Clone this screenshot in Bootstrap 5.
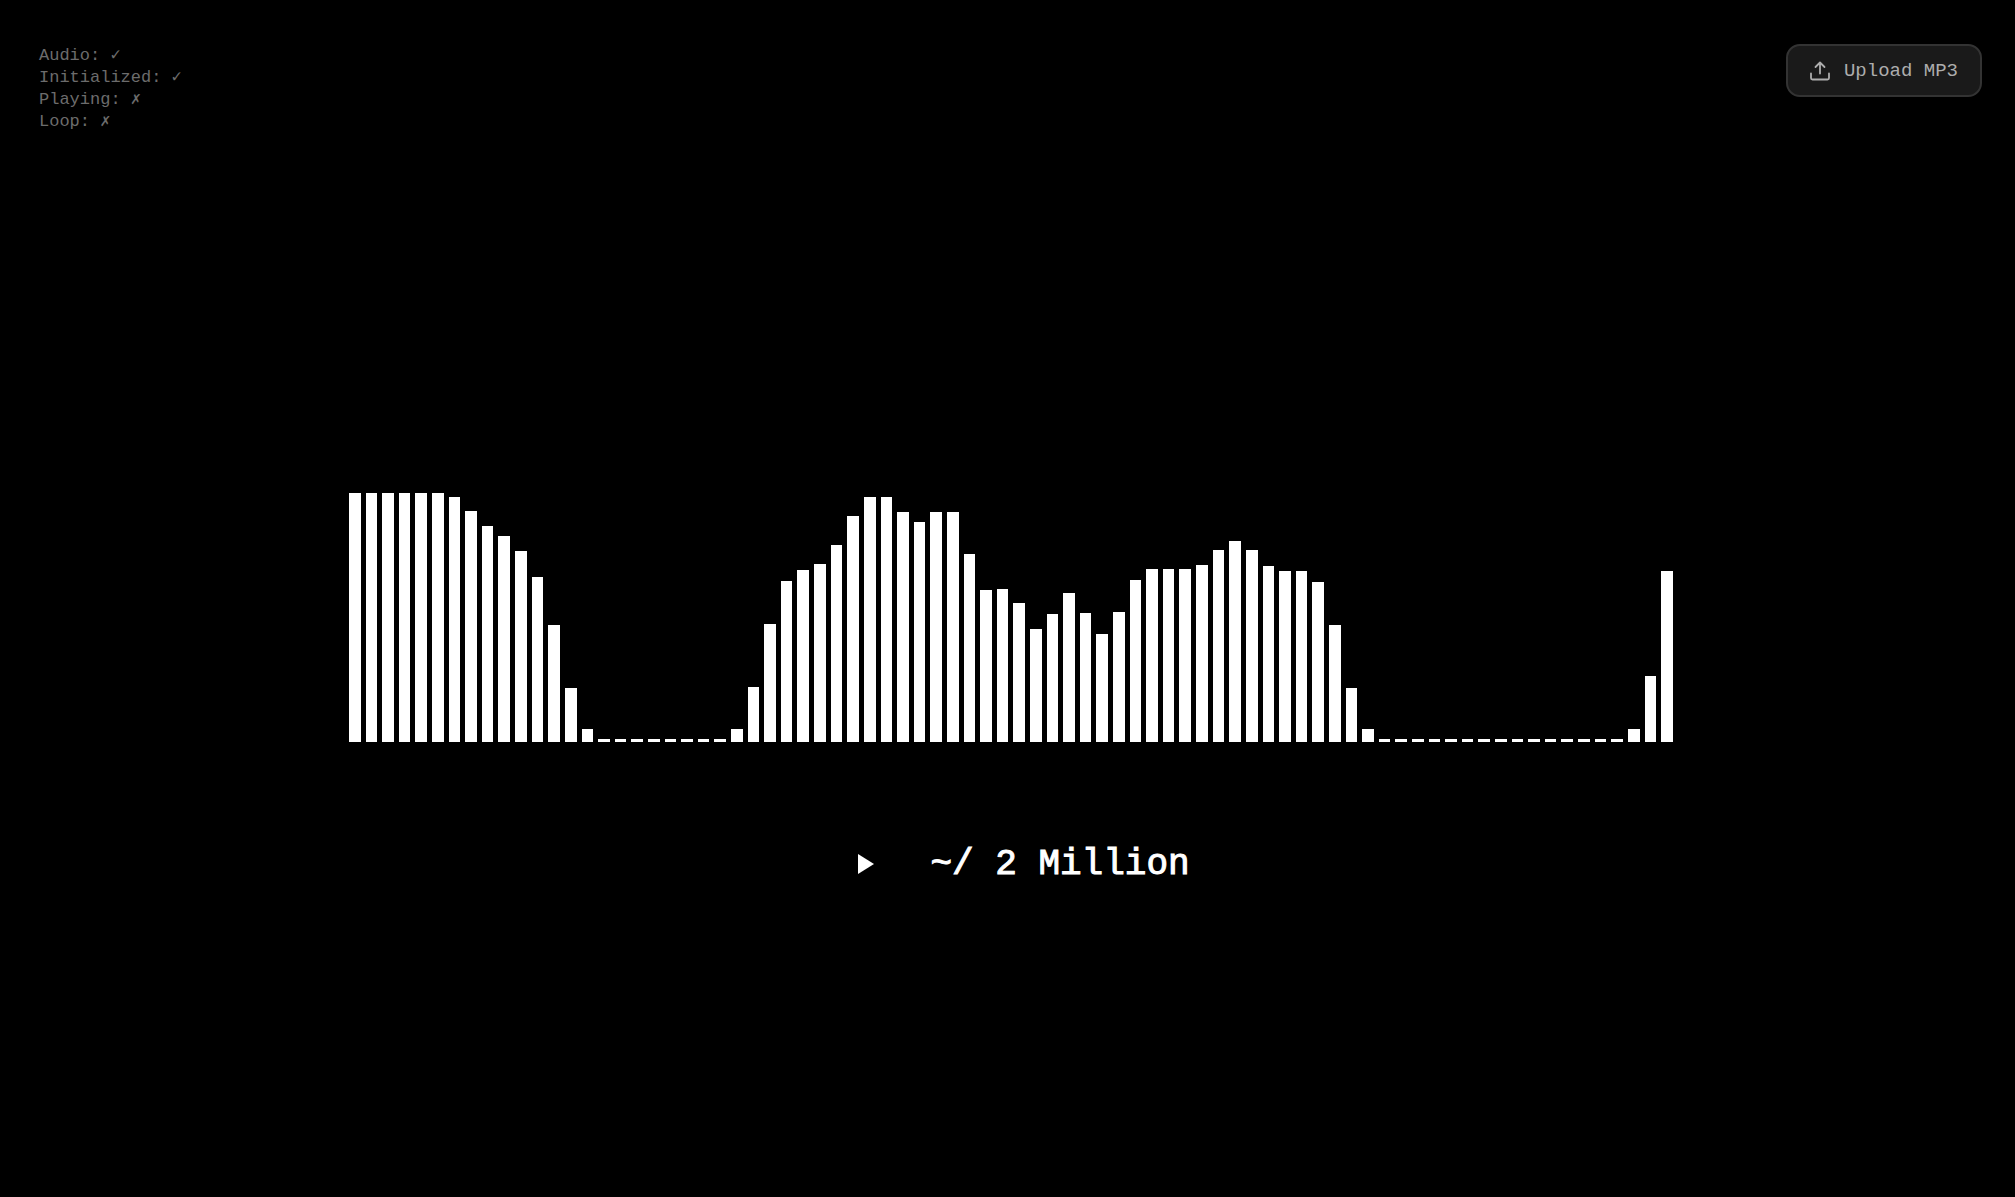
<!DOCTYPE html>
<html lang="en">
<head>
<meta charset="utf-8">
<meta name="viewport" content="width=device-width, initial-scale=1">
<title>Audio visualizer</title>
<link href="https://cdn.jsdelivr.net/npm/bootstrap@5.3.0/dist/css/bootstrap.min.css" rel="stylesheet">
<style>
  body { background: #000; color: #fff; font-family: "Liberation Mono", "DejaVu Sans Mono", monospace; }
  .top-bar { padding: 44px 33px 0 39px; }
  .status-list { padding-top: 1px; color: #6c6c6c; font-size: 17px; line-height: 22px; }
  .upload-btn { height: 53px; padding: 0 22px; gap: 14px; font-size: 19px; line-height: 24px; border: 2px solid #333; border-radius: 14px; background: #1a1a1a; color: #adadad; }
  .upload-btn:hover { background: #262626; border-color: #4a4a4a; color: #fff; }
  .stage { padding: 360px 24px 48px 31px; gap: 96px; }
  .spectrum { max-width: 1324px; height: 249px; gap: 5px; }
  .spectrum > div { flex: 1 1 0; min-width: 0; background: #fff; }
  .track { gap: 40px; padding-left: 10px; }
  .play-btn { padding: 0 16px; color: #fff; border: 0; }
  .track-name { padding-top: 3px; font-size: 36px; line-height: 48px; font-weight: 400; -webkit-text-stroke: 1px currentColor; }
</style>
</head>
<body class="min-vh-100 d-flex flex-column">
<header class="top-bar d-flex justify-content-between align-items-start">
  <ul class="status-list list-unstyled mb-0">
    <li>Audio: ✓</li>
    <li>Initialized: ✓</li>
    <li>Playing: ✗</li>
    <li>Loop: ✗</li>
  </ul>
  <button type="button" class="upload-btn btn d-inline-flex align-items-center">
    <svg width="20" height="20" viewBox="0 0 20 20" fill="none" stroke="currentColor" stroke-width="1.8" stroke-linecap="round" stroke-linejoin="round" aria-hidden="true"><path d="M1 12.500v4.500a1.500 1.500 0 0 0 1.500 1.500h15a1.500 1.500 0 0 0 1.500-1.500v-4.500M10 12.500V1.500M5.500 6 10 1.500 14.500 6"/></svg>
    <span>Upload MP3</span>
  </button>
</header>
<main class="stage flex-grow-1 d-flex flex-column align-items-center">
  <div class="spectrum w-100 d-flex align-items-end" id="spectrum" role="img" aria-label="Frequency spectrum"></div>
  <div class="track d-flex align-items-center justify-content-center">
    <button type="button" class="play-btn btn d-flex" aria-label="Play">
      <svg width="16" height="20" viewBox="0 0 16 20" fill="currentColor" aria-hidden="true"><path d="M0 0v20L16 10z"/></svg>
    </button>
    <h1 class="track-name mb-0">~/ 2 Million</h1>
  </div>
</main>
<script src="https://cdn.jsdelivr.net/npm/bootstrap@5.3.0/dist/js/bootstrap.bundle.min.js"></script>
<script>
  // Level of each frequency band, out of 249
  const levels = [
    249, 249, 249, 249, 249, 249, 245, 231, 216, 206, 191, 165, 117, 54, 13,
    3, 3, 3, 3, 3, 3, 3, 3, 13, 55, 118, 161, 172, 178, 197, 226, 245, 245,
    230, 220, 230, 230, 188, 152, 153, 139, 113, 128, 149, 129, 108, 130, 162,
    173, 173, 173, 177, 192, 201, 192, 176, 171, 171, 160, 117, 54, 13,
    3, 3, 3, 3, 3, 3, 3, 3, 3, 3, 3, 3, 3, 3, 3, 13, 66, 171
  ];
  const spectrum = document.getElementById('spectrum');
  for (const level of levels) {
    const bar = document.createElement('div');
    bar.style.height = level / 249 * 100 + '%';
    spectrum.append(bar);
  }
</script>
</body>
</html>
